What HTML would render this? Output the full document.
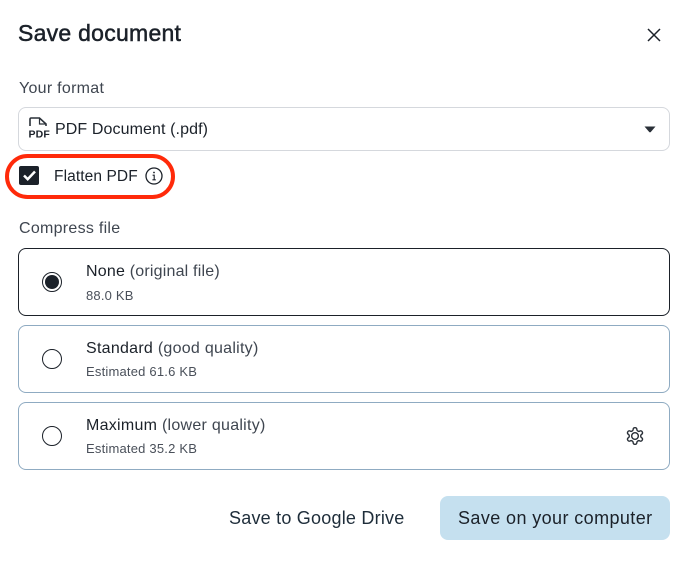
<!DOCTYPE html>
<html>
<head>
<meta charset="utf-8">
<style>
html,body{margin:0;padding:0;background:#fff}
#p{position:relative;width:688px;height:561px;overflow:hidden;background:#fff;font-family:"Liberation Sans",sans-serif;color:#1b2129}
.t{position:absolute;white-space:nowrap;line-height:20px}
.b{position:absolute;box-sizing:border-box;background:#fff}
.card{left:18px;width:652px;height:68px;border-radius:8px;border:1px solid #8fabc2}
.r{position:absolute;left:42px;width:20px;height:20px;box-sizing:border-box;border:1.5px solid #1b2129;border-radius:50%;background:#fff}
.m{font-size:16px;letter-spacing:.27px;color:#1b2129}
.m span{color:#3f4650}
.s{font-size:13px;letter-spacing:.2px;color:#4a505a}
.l{font-size:16px;letter-spacing:.28px;color:#3f4650}
svg{position:absolute;overflow:visible}
</style>
</head>
<body>
<div id="p">
<div class="t" style="left:18px;top:20px;font-size:23px;line-height:26px;letter-spacing:.26px;color:#1b2129;-webkit-text-stroke:.5px #1b2129">Save document</div>
<svg style="left:647px;top:28px" width="14" height="14" viewBox="0 0 14 14"><path d="M1 1L13 13M13 1L1 13" stroke="#1b2129" stroke-width="1.5" fill="none"/></svg>

<div class="t l" style="left:19px;top:79px">Your format</div>
<div class="b" style="left:18px;top:107px;width:652px;height:44px;border:1px solid #d5d8dd;border-radius:8px"></div>
<svg style="left:28px;top:116px" width="21" height="24" viewBox="0 0 21 24"><path d="M2 10V3.200Q2 2 3.200 2H11.500L18 8V10" fill="none" stroke="#2a3038" stroke-width="1.600"/><path d="M11.500 2V8H18" fill="none" stroke="#2a3038" stroke-width="1.200"/><text x="0.500" y="21.500" font-family="Liberation Sans" font-weight="700" font-size="10.500" letter-spacing=".15" fill="#1b2129">PDF</text></svg>
<div class="t" style="left:55px;top:120px;font-size:16px;letter-spacing:.1px;color:#1b2129">PDF Document (.pdf)</div>
<svg style="left:644px;top:126px" width="12" height="7" viewBox="0 0 12 7"><path d="M0.500 0.500H11.500L6.800 6Q6 6.800 5.200 6Z" fill="#2a3038"/></svg>

<div class="b" style="left:5px;top:154px;width:170px;height:45px;border:4.500px solid #ff2a0a;border-radius:23px;background:transparent"></div>
<div class="b" style="left:19px;top:166px;width:20px;height:19px;background:#1b2129;border-radius:2px"></div>
<svg style="left:23px;top:170px" width="13" height="11" viewBox="0 0 13 11"><path d="M1 5.500L4.700 9.200L12 1.500" fill="none" stroke="#fff" stroke-width="2.500"/></svg>
<div class="t" style="left:54px;top:167px;font-size:15.500px;letter-spacing:.1px;color:#1b2129">Flatten PDF</div>
<svg style="left:145px;top:167px" width="18" height="18" viewBox="0 0 18 18"><circle cx="9" cy="9" r="8" fill="none" stroke="#1b2129" stroke-width="1.300"/><path d="M7.600 8.200H9.200V12.800M7.400 12.800H10.800" fill="none" stroke="#1b2129" stroke-width="1.100"/><circle cx="9" cy="5.500" r=".9" fill="#1b2129"/></svg>

<div class="t l" style="left:19px;top:219px">Compress file</div>

<div class="b card" style="top:248px;border-color:#1b2129"></div>
<div class="r" style="top:272px"></div>
<div style="position:absolute;left:45px;top:275px;width:14px;height:14px;border-radius:50%;background:#1b2129"></div>
<div class="t m" style="left:86px;top:262px;letter-spacing:.2px">None <span>(original file)</span></div>
<div class="t s" style="left:86px;top:286px">88.0 KB</div>

<div class="b card" style="top:325px"></div>
<div class="r" style="top:349px"></div>
<div class="t m" style="left:86px;top:339px">Standard <span>(good quality)</span></div>
<div class="t s" style="left:86px;top:362px">Estimated 61.6 KB</div>

<div class="b card" style="top:402px"></div>
<div class="r" style="top:426px"></div>
<div class="t m" style="left:86px;top:416px">Maximum <span>(lower quality)</span></div>
<div class="t s" style="left:86px;top:439px">Estimated 35.2 KB</div>
<svg style="left:624.500px;top:425.500px" width="20" height="20" viewBox="0 0 24 24"><path d="M12.220 2h-.44a2 2 0 0 0-2 2v.18a2 2 0 0 1-1 1.730l-.43.25a2 2 0 0 1-2 0l-.15-.08a2 2 0 0 0-2.730.73l-.22.38a2 2 0 0 0 .73 2.730l.15.1a2 2 0 0 1 1 1.720v.51a2 2 0 0 1-1 1.740l-.15.09a2 2 0 0 0-.73 2.730l.22.38a2 2 0 0 0 2.730.73l.15-.08a2 2 0 0 1 2 0l.43.25a2 2 0 0 1 1 1.730V20a2 2 0 0 0 2 2h.44a2 2 0 0 0 2-2v-.18a2 2 0 0 1 1-1.730l.43-.25a2 2 0 0 1 2 0l.15.08a2 2 0 0 0 2.730-.73l.22-.39a2 2 0 0 0-.73-2.730l-.15-.08a2 2 0 0 1-1-1.740v-.5a2 2 0 0 1 1-1.740l.15-.09a2 2 0 0 0 .73-2.730l-.22-.38a2 2 0 0 0-2.730-.73l-.15.08a2 2 0 0 1-2 0l-.43-.25a2 2 0 0 1-1-1.730V4a2 2 0 0 0-2-2z" fill="none" stroke="#2a3038" stroke-width="1.700"/><circle cx="12" cy="12" r="4" fill="none" stroke="#2a3038" stroke-width="1.700"/></svg>

<div class="t" style="left:229px;top:508px;font-size:18px;letter-spacing:.22px;color:#1e2d3a">Save to Google Drive</div>
<div class="b" style="left:440px;top:496px;width:230px;height:44px;background:#c5e0ef;border-radius:8px"></div>
<div class="t" style="left:458px;top:508px;font-size:18px;letter-spacing:.4px;color:#1b2129">Save on your computer</div>
</div>
</body>
</html>
